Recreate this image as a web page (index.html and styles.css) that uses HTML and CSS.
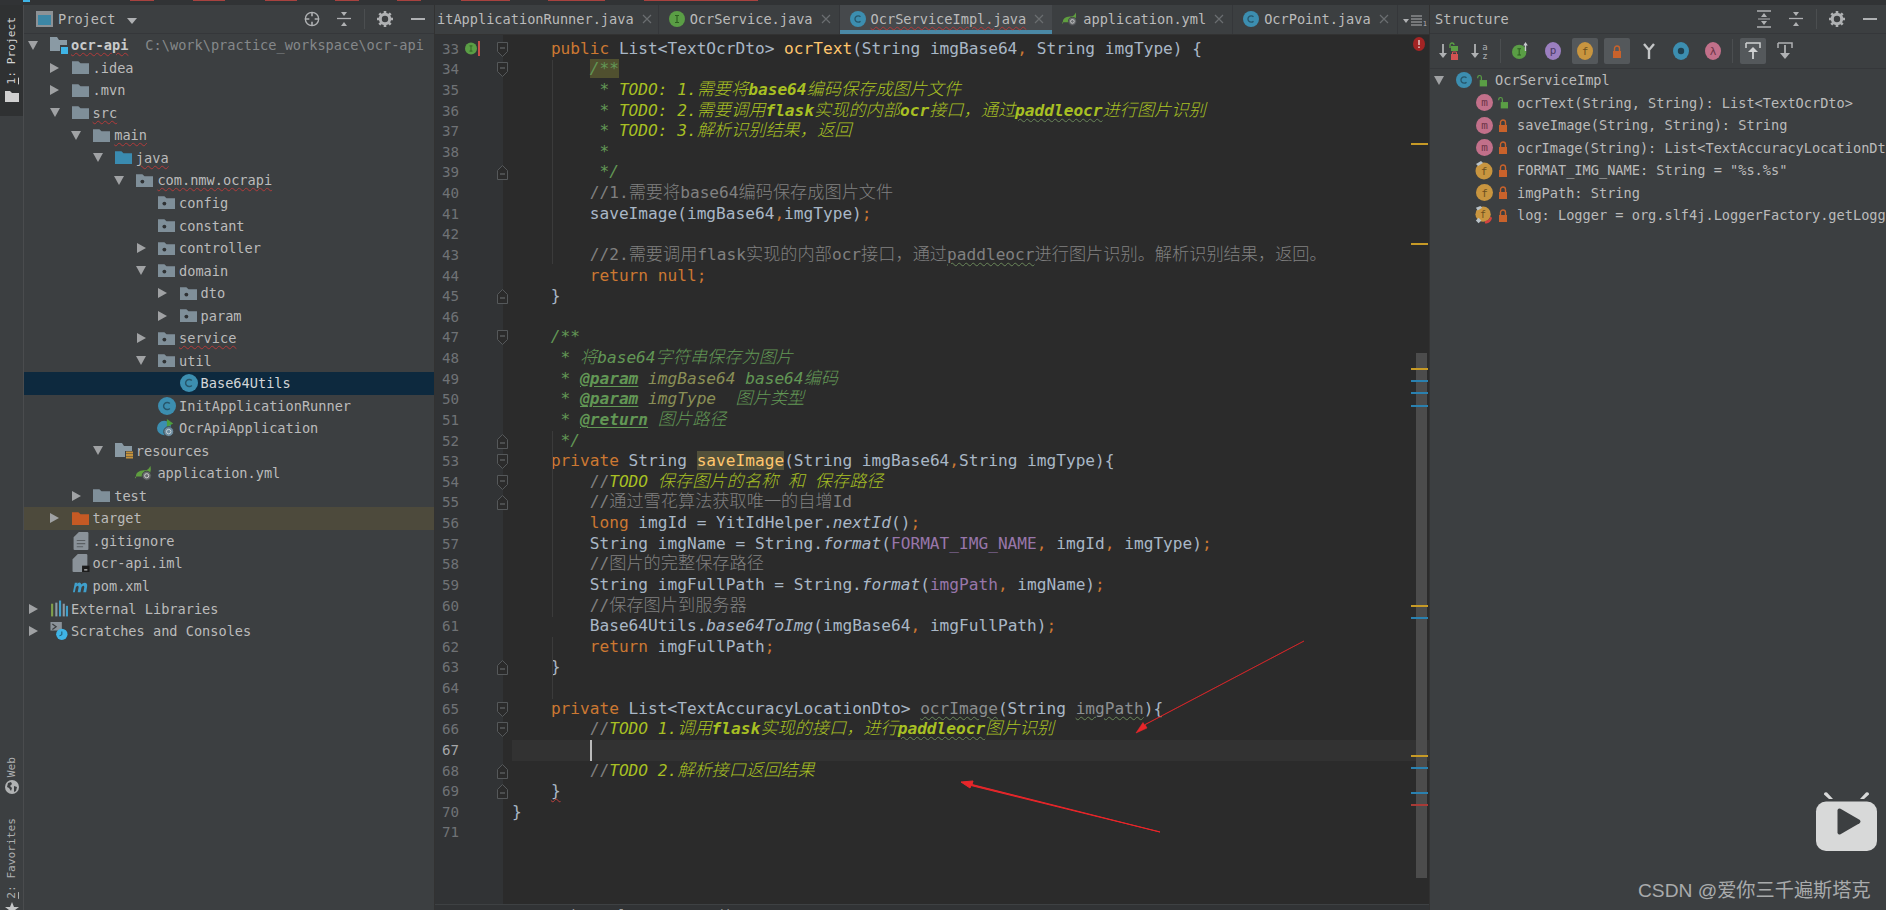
FILE: index.html
```html
<!DOCTYPE html>
<html lang="zh">
<head>
<meta charset="utf-8">
<title>ocr-api</title>
<link rel="stylesheet" href="styles.css">
</head>
<body>
<svg class="sprite" width="0" height="0">
  <symbol id="folder" viewBox="0 0 16 14"><path d="M0 1h6l2 2h8v10H0z"/></symbol>
  <symbol id="pkg" viewBox="0 0 16 14"><path d="M0 1h6l2 2h8v10H0z" fill="#7f8f99"/><circle cx="6" cy="8" r="1.8" fill="#2f3234"/></symbol>
  <symbol id="root" viewBox="0 0 18 18"><path d="M0 1h7l2 3h8v11H0z" fill="#8a9aa4"/><rect x="10" y="9" width="8" height="9" fill="#3c3f41"/><rect x="11" y="11" width="7" height="7" fill="#3fb4e6"/></symbol>
  <symbol id="res" viewBox="0 0 18 18"><path d="M0 1h7l2 3h8v11H0z" fill="#8a9aa4"/><rect x="10" y="9" width="8" height="9" fill="#3c3f41"/><path d="M11 10.5h7M11 13h7M11 15.500h7" stroke="#c4923c" stroke-width="2"/></symbol>
  <symbol id="cls" viewBox="0 0 16 16"><circle cx="8" cy="8" r="8" fill="#3c8eb0"/><path d="M10.500 5.800A3.200 3.200 0 1 0 10.500 10.200" fill="none" stroke="#27566b" stroke-width="1.300"/></symbol>
  <symbol id="run" viewBox="0 0 20 20"><circle cx="8" cy="10" r="8" fill="#3c8eb0"/><path d="M11 0l7 5-7 4z" fill="#4e9f3d"/><circle cx="13" cy="14" r="5.500" fill="#6f8da0" stroke="#3c3f41"/><circle cx="13" cy="14" r="2.500" fill="none" stroke="#cfd8dc"/></symbol>
  <symbol id="spring" viewBox="0 0 20 18"><path d="M1 13C1 7 7 6 11 6c3 0 5-2 6-5 2 6-1 12-7 12z" fill="#5f9e3f"/><path d="M1 13l-1 2" stroke="#5f9e3f"/><circle cx="13" cy="12" r="5" fill="#6a6d70" stroke="#3c3f41"/><circle cx="13" cy="12" r="2.300" fill="none" stroke="#d6d6d6"/></symbol>
  <symbol id="file" viewBox="0 0 14 17"><path d="M5 0h8a1 1 0 0 1 1 1v15a1 1 0 0 1-1 1H1a1 1 0 0 1-1-1V5z" fill="#8a9299"/><path d="M3 8h8M3 11h8M3 14h6" stroke="#5a5f63"/></symbol>
  <symbol id="iml" viewBox="0 0 16 17"><path d="M5 0h8a1 1 0 0 1 1 1v15a1 1 0 0 1-1 1H1a1 1 0 0 1-1-1V5z" fill="#8a9299"/><rect x="9" y="11" width="7" height="6" fill="#1b1b1b"/><path d="M11 15h3" stroke="#ddd"/></symbol>
  <symbol id="maven" viewBox="0 0 18 14"><path d="M1 13L3 3h3L5 5c2-3 4-3 5 0 2-3 7-3 6 2l-1 6h-3l1-5c0-3-2-2-3 0l-1 5H6l1-5c0-3-2-2-3 0l-1 5z" fill="#3f9fcb"/></symbol>
  <symbol id="libs" viewBox="0 0 17 16"><path d="M1 3h2v12H1z" fill="#7fa04c"/><path d="M5 2h2v13H5z" fill="#8a9aa4"/><path d="M8.500 0h2v15h-2z" fill="#3f9fcb"/><path d="M12 3h2v12h-2z" fill="#8a9aa4"/><path d="M15 5h2v10h-2z" fill="#3f9fcb"/></symbol>
  <symbol id="scratch" viewBox="0 0 18 19"><path d="M0 0h12v9H0z" fill="#8a9299"/><path d="M2 2l4 3-4 3" stroke="#3c3f41" stroke-width="1.300" fill="none"/><circle cx="12" cy="13" r="6" fill="#3fb4e6"/><path d="M12 10v3.500l-2.500 1" stroke="#1c4f66" fill="none"/></symbol>
  <symbol id="m" viewBox="0 0 17 17"><circle cx="8.500" cy="8.500" r="8.500" fill="#c2708a"/><text x="8.500" y="12" class="glyph" fill="#6c3447">m</text></symbol>
  <symbol id="f" viewBox="0 0 17 17"><circle cx="8.500" cy="8.500" r="8.500" fill="#c8953f"/><text x="8.500" y="12.500" class="glyph" fill="#6d5020">f</text></symbol>
  <symbol id="ff" viewBox="0 0 18 19"><circle cx="9" cy="10" r="8.500" fill="#c8953f"/><text x="9" y="14" class="glyph" fill="#6d5020">f</text><path d="M1 3l5-3 2 2-5 3z" fill="#b9c2c8"/></symbol>
  <symbol id="ffl" viewBox="0 0 20 21"><circle cx="9" cy="9" r="8.500" fill="#c8953f"/><text x="9" y="13" class="glyph" fill="#6d5020">f</text><path d="M1 2l5-2 2 2-5 3z" fill="#b9c2c8"/><path d="M4 13l3 3-3 3-3-3z" fill="#b9c2c8"/><path d="M11 19c3 1 7-1 8-6l-2-1c-1 3-3 4-6 5z" fill="#d2433f"/></symbol>
  <symbol id="lock" viewBox="0 0 10 13"><path d="M2.500 6V3.500a2.500 2.500 0 0 1 5 0V6" fill="none" stroke="#c9622b" stroke-width="1.400"/><rect x="1" y="6" width="8" height="7" fill="#c9622b"/></symbol>
  <symbol id="unlock" viewBox="0 0 11 13"><path d="M0.800 4V3a2 2 0 0 1 4 0v3" fill="none" stroke="#5a9e45" stroke-width="1.300"/><rect x="3" y="6" width="8" height="7" fill="#5a9e45"/></symbol>
  <symbol id="gear" viewBox="0 0 16 16"><path d="M6.500 0h3l.4 2.300 1.500.7 2-1.300 2.100 2.100-1.300 2 .7 1.500 2.100.400v3l-2.100.4-.7 1.500 1.300 2-2.100 2.100-2-1.300-1.500.7-.4 2.100h-3l-.4-2.100-1.500-.7-2 1.300L-.5 13.300l1.300-2-.7-1.500L-2 9.400v-3" fill="none"/><circle cx="8" cy="8" r="4.700" fill="none" stroke="#afb1b3" stroke-width="3"/><path d="M8 0v3M8 13v3M0 8h3M13 8h3M2.300 2.300l2.200 2.200M11.500 11.500l2.200 2.200M13.700 2.300l-2.200 2.200M4.500 11.500l-2.200 2.200" stroke="#afb1b3" stroke-width="2.600"/></symbol>
  <symbol id="collapse" viewBox="0 0 16 16"><path d="M1 7.500h14" stroke="#afb1b3" stroke-width="1.300"/><path d="M5 1h6L8 5zM5 15h6L8 11z" fill="#afb1b3"/></symbol>
  <symbol id="expand" viewBox="0 0 16 18"><path d="M1 1h14M1 17h14" stroke="#afb1b3" stroke-width="1.500"/><path d="M5 7h6L8 3zM5 11h6L8 15z" fill="#afb1b3"/><path d="M2 9h12" stroke="#afb1b3"/></symbol>
  <symbol id="locate" viewBox="0 0 18 18"><circle cx="9" cy="9" r="7.500" fill="none" stroke="#afb1b3" stroke-width="1.500"/><path d="M9 1v5M9 12v5M1 9h5M12 9h5" stroke="#afb1b3" stroke-width="1.800"/></symbol>
  <symbol id="panel" viewBox="0 0 17 16"><rect width="17" height="16" fill="#8d9296"/><rect x="2" y="4" width="13" height="10" fill="#3c87a6"/></symbol>
  <symbol id="folderlight" viewBox="0 0 14 11"><path d="M0 0h5l2 2h7v9H0z" fill="#d0d0d0"/></symbol>
  <symbol id="globe" viewBox="0 0 14 14"><circle cx="7" cy="7" r="7" fill="#b0b2b3"/><path d="M3 3l3-1 1 2-2 2 2 2-1 3-2-3-2-1zM9 6l3 1-1 4-2 1z" fill="#3c3f41"/></symbol>
  <symbol id="star" viewBox="0 0 14 14"><path d="M7 0l2 5h5l-4 3 2 6-5-4-5 4 2-6-4-3h5z" fill="#c4c6c7"/></symbol>
  <symbol id="close" viewBox="0 0 10 10"><path d="M1 1l8 8M9 1l-8 8" stroke="#6a6d70" stroke-width="1.200"/></symbol>
  <symbol id="ifc" viewBox="0 0 16 16"><circle cx="8" cy="8" r="8" fill="#5a9e45"/><path d="M6 4.500h4M8 4.500v7M6 11.500h4" stroke="#2d5e20" stroke-width="1.100"/></symbol>
  <symbol id="foldo" viewBox="0 0 11 15"><path d="M.5.5h10v9l-5 5-5-5z" fill="#2b2b2b" stroke="#55585a"/><path d="M3 6h5" stroke="#6f7274"/></symbol>
  <symbol id="foldc" viewBox="0 0 11 15"><path d="M.5 14.500h10v-9l-5-5-5 5z" fill="#2b2b2b" stroke="#55585a"/><path d="M3 9h5" stroke="#6f7274"/></symbol>
  <symbol id="sortv" viewBox="0 0 22 18"><path d="M5 2v11" stroke="#afb1b3" stroke-width="1.800"/><path d="M1 11h8l-4 5z" fill="#afb1b3"/><path d="M12 6V3a2 2 0 0 1 4 0" fill="none" stroke="#5a9e45" stroke-width="1.300"/><rect x="13" y="4" width="7" height="5" fill="#5a9e45"/><rect x="13" y="12" width="7" height="6" fill="#d25252"/><path d="M14.500 12v-2h4v2" fill="none" stroke="#d25252"/></symbol>
  <symbol id="sortaz" viewBox="0 0 22 18"><path d="M5 2v11" stroke="#afb1b3" stroke-width="1.800"/><path d="M1 11h8l-4 5z" fill="#afb1b3"/><text x="15" y="8" class="glyph small" fill="#afb1b3">a</text><text x="15" y="17" class="glyph small" fill="#afb1b3">z</text></symbol>
  <symbol id="inh" viewBox="0 0 20 20"><circle cx="8" cy="11" r="8" fill="#5a9e45"/><path d="M6 7.500h4M8 7.500v7M6 14.500h4" stroke="#2d5e20" stroke-width="1.200"/><path d="M15 10V3" stroke="#c8ccce" stroke-width="1.500"/><path d="M12.500 4L15 0l2.500 4z" fill="#c8ccce"/></symbol>
  <symbol id="pp" viewBox="0 0 16 18"><ellipse cx="8" cy="9" rx="8" ry="9" fill="#9b7fc0"/><text x="8" y="12" class="glyph" fill="#4a3a63">p</text></symbol>
  <symbol id="fo" viewBox="0 0 16 18"><ellipse cx="8" cy="9" rx="8" ry="9" fill="#c8953f"/><text x="8" y="13" class="glyph" fill="#6d5020">f</text></symbol>
  <symbol id="lam" viewBox="0 0 16 18"><ellipse cx="8" cy="9" rx="8" ry="9" fill="#c2708a"/><text x="8" y="13" class="glyph" fill="#6c3447">λ</text></symbol>
  <symbol id="anon" viewBox="0 0 16 18"><ellipse cx="8" cy="9" rx="8" ry="9" fill="#3c8eb0"/><circle cx="8" cy="9" r="3.200" fill="#20404f"/></symbol>
  <symbol id="ytree" viewBox="0 0 14 18"><path d="M2 2l5 6 5-6M7 8v9" fill="none" stroke="#c4c6c7" stroke-width="2.400"/></symbol>
  <symbol id="ato" viewBox="0 0 16 18"><path d="M1 1h14v5M1 1v5" fill="none" stroke="#d0d2d3" stroke-width="1.500"/><path d="M8 6v11" stroke="#d0d2d3" stroke-width="1.800"/><path d="M3 10h10L8 5z" fill="#d0d2d3"/></symbol>
  <symbol id="afrom" viewBox="0 0 16 18"><path d="M1 1h14v5M1 1v5" fill="none" stroke="#afb1b3" stroke-width="1.500"/><path d="M8 3v11" stroke="#afb1b3" stroke-width="1.800"/><path d="M3 11h10l-5 6z" fill="#afb1b3"/></symbol>
  <symbol id="tabs" viewBox="0 0 24 12"><path d="M1 5h6L4 9z" fill="#afb1b3"/><path d="M9 2h11M9 5h11M9 8h11M9 11h11" stroke="#afb1b3" stroke-width="1.100"/></symbol>
  <symbol id="error" viewBox="0 0 12 14"><ellipse cx="6" cy="7" rx="6" ry="7" fill="#a32424"/><path d="M6 3v5M6 9.500v1.500" stroke="#e8c8c8" stroke-width="1.500"/></symbol>
</svg>

<svg class="topstrip" viewBox="0 0 1886 5" preserveAspectRatio="none">
  <rect x="23" y="0" width="7" height="2" fill="#3fb4e6"/>
  <rect x="130" y="0" width="24" height="1" fill="#a8423f"/>
  <rect x="193" y="0" width="32" height="1" fill="#a8423f"/>
  <rect x="265" y="0" width="32" height="1" fill="#a8423f"/>
  <rect x="335" y="0" width="24" height="1" fill="#a8423f"/>
  <rect x="397" y="0" width="24" height="1" fill="#a8423f"/>
  <rect x="461" y="0" width="49" height="1" fill="#a8423f"/>
  <rect x="548" y="0" width="57" height="1" fill="#a8423f"/>
  <rect x="644" y="0" width="114" height="1" fill="#a8423f"/>
</svg>

<main class="ide">
  <aside class="rail">
    <div class="rail-tab">
      <span class="vtext bright"><u>1</u>: Project</span>
      <svg class="rail-folder"><use href="#folderlight"/></svg>
    </div>
    <div class="rail-bottom">
      <span class="vtext">Web</span>
      <svg class="rail-globe"><use href="#globe"/></svg>
      <span class="vtext fav"><u>2</u>: Favorites</span>
      <svg class="rail-star"><use href="#star"/></svg>
    </div>
  </aside>

  <section class="project">
    <header class="panel-head">
      <svg class="head-panel"><use href="#panel"/></svg>
      <span class="head-title">Project</span>
      <span class="caret-down"></span>
      <svg class="hicon first"><use href="#locate"/></svg>
      <svg class="hicon"><use href="#collapse"/></svg>
      <span class="hsep"></span>
      <svg class="hicon"><use href="#gear"/></svg>
      <span class="hminus"></span>
    </header>
    <div class="tree">
      <div class="row l0"><span class="arrow open"></span><svg class="ic"><use href="#root"/></svg><span class="bold err">ocr-api</span><span class="path">C:\work\practice_workspace\ocr-api</span></div>
      <div class="row l1"><span class="arrow"></span><svg class="ic fd"><use href="#folder"/></svg><span>.idea</span></div>
      <div class="row l1"><span class="arrow"></span><svg class="ic fd"><use href="#folder"/></svg><span>.mvn</span></div>
      <div class="row l1"><span class="arrow open"></span><svg class="ic fd"><use href="#folder"/></svg><span class="err">src</span></div>
      <div class="row l2"><span class="arrow open"></span><svg class="ic fd"><use href="#folder"/></svg><span class="err">main</span></div>
      <div class="row l3"><span class="arrow open"></span><svg class="ic fd blue"><use href="#folder"/></svg><span class="err">java</span></div>
      <div class="row l4"><span class="arrow open"></span><svg class="ic fd"><use href="#pkg"/></svg><span class="err">com.nmw.ocrapi</span></div>
      <div class="row l5"><span class="arrow none"></span><svg class="ic fd"><use href="#pkg"/></svg><span>config</span></div>
      <div class="row l5"><span class="arrow none"></span><svg class="ic fd"><use href="#pkg"/></svg><span>constant</span></div>
      <div class="row l5"><span class="arrow"></span><svg class="ic fd"><use href="#pkg"/></svg><span>controller</span></div>
      <div class="row l5"><span class="arrow open"></span><svg class="ic fd"><use href="#pkg"/></svg><span>domain</span></div>
      <div class="row l6"><span class="arrow"></span><svg class="ic fd"><use href="#pkg"/></svg><span>dto</span></div>
      <div class="row l6"><span class="arrow"></span><svg class="ic fd"><use href="#pkg"/></svg><span>param</span></div>
      <div class="row l5"><span class="arrow"></span><svg class="ic fd"><use href="#pkg"/></svg><span class="err">service</span></div>
      <div class="row l5"><span class="arrow open"></span><svg class="ic fd"><use href="#pkg"/></svg><span>util</span></div>
      <div class="row l6 selected"><span class="arrow none"></span><svg class="ic"><use href="#cls"/></svg><span>Base64Utils</span></div>
      <div class="row l5"><span class="arrow none"></span><svg class="ic"><use href="#cls"/></svg><span>InitApplicationRunner</span></div>
      <div class="row l5"><span class="arrow none"></span><svg class="ic wide"><use href="#run"/></svg><span>OcrApiApplication</span></div>
      <div class="row l3"><span class="arrow open"></span><svg class="ic"><use href="#res"/></svg><span>resources</span></div>
      <div class="row l4"><span class="arrow none"></span><svg class="ic wide"><use href="#spring"/></svg><span>application.yml</span></div>
      <div class="row l2"><span class="arrow"></span><svg class="ic fd"><use href="#folder"/></svg><span>test</span></div>
      <div class="row l1 excluded"><span class="arrow"></span><svg class="ic fd orange"><use href="#folder"/></svg><span>target</span></div>
      <div class="row l1"><span class="arrow none"></span><svg class="ic"><use href="#file"/></svg><span>.gitignore</span></div>
      <div class="row l1"><span class="arrow none"></span><svg class="ic"><use href="#iml"/></svg><span>ocr-api.iml</span></div>
      <div class="row l1"><span class="arrow none"></span><svg class="ic fd"><use href="#maven"/></svg><span>pom.xml</span></div>
      <div class="row l0"><span class="arrow"></span><svg class="ic"><use href="#libs"/></svg><span>External Libraries</span></div>
      <div class="row l0"><span class="arrow"></span><svg class="ic"><use href="#scratch"/></svg><span>Scratches and Consoles</span></div>
    </div>
  </section>

  <section class="editor">
    <nav class="tabs">
      <div class="tab clipped"><span>itApplicationRunner.java</span><svg class="x"><use href="#close"/></svg></div>
      <div class="tab"><svg class="tic"><use href="#ifc"/></svg><span>OcrService.java</span><svg class="x"><use href="#close"/></svg></div>
      <div class="tab active"><svg class="tic"><use href="#cls"/></svg><span class="err">OcrServiceImpl.java</span><svg class="x"><use href="#close"/></svg></div>
      <div class="tab"><svg class="tic"><use href="#spring"/></svg><span>application.yml</span><svg class="x"><use href="#close"/></svg></div>
      <div class="tab"><svg class="tic"><use href="#cls"/></svg><span>OcrPoint.java</span><svg class="x"><use href="#close"/></svg></div>
      <svg class="tabmenu"><use href="#tabs"/></svg><span class="tabmenu-n">1</span>
    </nav>
    <div class="body">
      <div class="lines">
        <div class="ln"><div class="no">33<svg class="gut-i"><use href="#ifc"/></svg><span class="gut-up"></span><svg class="fold"><use href="#foldo"/></svg></div><div class="code">    <span class="k">public</span> List&lt;TextOcrDto&gt; <span class="f">ocrText</span>(String imgBase64<span class="k">,</span> String imgType) {</div></div>
        <div class="ln"><div class="no">34<svg class="fold"><use href="#foldo"/></svg></div><div class="code">        <span class="d hlb">/**</span></div></div>
        <div class="ln"><div class="no">35</div><div class="code d">         * <span class="t">TODO: 1.<span class="z">需要将</span><b>base64</b><span class="z">编码保存成图片文件</span></span></div></div>
        <div class="ln"><div class="no">36</div><div class="code d">         * <span class="t">TODO: 2.<span class="z">需要调用</span><b>flask</b><span class="z">实现的内部</span><b>ocr</b><span class="z">接口，通过</span><b class="wg">paddleocr</b><span class="z">进行图片识别</span></span></div></div>
        <div class="ln"><div class="no">37</div><div class="code d">         * <span class="t">TODO: 3.<span class="z">解析识别结果，返回</span></span></div></div>
        <div class="ln"><div class="no">38</div><div class="code d">         *</div></div>
        <div class="ln"><div class="no">39<svg class="fold"><use href="#foldc"/></svg></div><div class="code d">         */</div></div>
        <div class="ln"><div class="no">40</div><div class="code c">        //1.<span class="z">需要将</span>base64<span class="z">编码保存成图片文件</span></div></div>
        <div class="ln"><div class="no">41</div><div class="code">        saveImage(imgBase64<span class="k">,</span>imgType)<span class="k">;</span></div></div>
        <div class="ln"><div class="no">42</div><div class="code"> </div></div>
        <div class="ln"><div class="no">43</div><div class="code c">        //2.<span class="z">需要调用</span>flask<span class="z">实现的内部</span>ocr<span class="z">接口，通过</span><span class="wg">paddleocr</span><span class="z">进行图片识别。解析识别结果，返回。</span></div></div>
        <div class="ln"><div class="no">44</div><div class="code">        <span class="k">return null;</span></div></div>
        <div class="ln"><div class="no">45<svg class="fold"><use href="#foldc"/></svg></div><div class="code">    }</div></div>
        <div class="ln"><div class="no">46</div><div class="code"> </div></div>
        <div class="ln"><div class="no">47<svg class="fold"><use href="#foldo"/></svg></div><div class="code d">    /**</div></div>
        <div class="ln"><div class="no">48</div><div class="code d">     * <span class="z">将</span>base64<span class="z">字符串保存为图片</span></div></div>
        <div class="ln"><div class="no">49</div><div class="code d">     * <span class="dt">@param</span> <span class="dp">imgBase64</span> base64<span class="z">编码</span></div></div>
        <div class="ln"><div class="no">50</div><div class="code d">     * <span class="dt">@param</span> <span class="dp">imgType</span>  <span class="z">图片类型</span></div></div>
        <div class="ln"><div class="no">51</div><div class="code d">     * <span class="dt">@return</span> <span class="z">图片路径</span></div></div>
        <div class="ln"><div class="no">52<svg class="fold"><use href="#foldc"/></svg></div><div class="code d">     */</div></div>
        <div class="ln"><div class="no">53<svg class="fold"><use href="#foldo"/></svg></div><div class="code">    <span class="k">private</span> String <span class="f hl">saveImage</span>(String imgBase64<span class="k">,</span>String imgType){</div></div>
        <div class="ln"><div class="no">54<svg class="fold"><use href="#foldo"/></svg></div><div class="code c">        //<span class="t">TODO <span class="z">保存图片的名称</span> <span class="z">和</span> <span class="z">保存路径</span></span></div></div>
        <div class="ln"><div class="no">55<svg class="fold"><use href="#foldc"/></svg></div><div class="code c">        //<span class="z">通过雪花算法获取唯一的自增</span>Id</div></div>
        <div class="ln"><div class="no">56</div><div class="code">        <span class="k">long</span> imgId = YitIdHelper.<i>nextId</i>()<span class="k">;</span></div></div>
        <div class="ln"><div class="no">57</div><div class="code">        String imgName = String.<i>format</i>(<span class="v">FORMAT_IMG_NAME</span><span class="k">,</span> imgId<span class="k">,</span> imgType)<span class="k">;</span></div></div>
        <div class="ln"><div class="no">58</div><div class="code c">        //<span class="z">图片的完整保存路径</span></div></div>
        <div class="ln"><div class="no">59</div><div class="code">        String imgFullPath = String.<i>format</i>(<span class="v">imgPath</span><span class="k">,</span> imgName)<span class="k">;</span></div></div>
        <div class="ln"><div class="no">60</div><div class="code c">        //<span class="z">保存图片到服务器</span></div></div>
        <div class="ln"><div class="no">61</div><div class="code">        Base64Utils.<i>base64ToImg</i>(imgBase64<span class="k">,</span> imgFullPath)<span class="k">;</span></div></div>
        <div class="ln"><div class="no">62</div><div class="code">        <span class="k">return</span> imgFullPath<span class="k">;</span></div></div>
        <div class="ln"><div class="no">63<svg class="fold"><use href="#foldc"/></svg></div><div class="code">    }</div></div>
        <div class="ln"><div class="no">64</div><div class="code"> </div></div>
        <div class="ln"><div class="no">65<svg class="fold"><use href="#foldo"/></svg></div><div class="code">    <span class="k">private</span> List&lt;TextAccuracyLocationDto&gt; <span class="unused wg">ocrImage</span>(String <span class="unused wg">imgPath</span>){</div></div>
        <div class="ln"><div class="no">66<svg class="fold"><use href="#foldo"/></svg></div><div class="code c">        //<span class="t">TODO 1.<span class="z">调用</span><b>flask</b><span class="z">实现的接口，进行</span><b class="wg">paddleocr</b><span class="z">图片识别</span></span></div></div>
        <div class="ln current"><div class="no">67</div><div class="code">        <span class="cursor"></span></div></div>
        <div class="ln"><div class="no">68<svg class="fold"><use href="#foldc"/></svg></div><div class="code c">        //<span class="t">TODO 2.<span class="z">解析接口返回结果</span></span></div></div>
        <div class="ln"><div class="no">69<svg class="fold"><use href="#foldc"/></svg></div><div class="code">    <span class="errb">}</span></div></div>
        <div class="ln"><div class="no">70</div><div class="code">}</div></div>
        <div class="ln"><div class="no">71</div><div class="code"> </div></div>
        <span class="guide g1"></span><span class="guide g2"></span><span class="guide g3"></span>
      </div>
      <svg class="err-mark"><use href="#error"/></svg>
      <span class="thumb"></span>
      <span class="mark y m1"></span><span class="mark y m2"></span><span class="mark y m3"></span>
      <span class="mark b m4"></span><span class="mark b m5"></span><span class="mark b m6"></span>
      <span class="mark y m7"></span><span class="mark b m8"></span><span class="mark y m9"></span>
      <span class="mark b m10"></span><span class="mark b m11"></span><span class="mark r m12"></span>
    </div>
    <div class="crumbs">OcrServiceImpl › ocrImage()</div>
  </section>

  <section class="structure">
    <header class="panel-head">
      <span class="head-title s">Structure</span>
      <svg class="hicon first"><use href="#expand"/></svg>
      <svg class="hicon"><use href="#collapse"/></svg>
      <span class="hsep"></span>
      <svg class="hicon"><use href="#gear"/></svg>
      <span class="hminus"></span>
    </header>
    <div class="stools">
      <span class="tb"><svg class="tbi wide"><use href="#sortv"/></svg></span>
      <span class="tb"><svg class="tbi wide"><use href="#sortaz"/></svg></span>
      <span class="tsep"></span>
      <span class="tb"><svg class="tbi wide"><use href="#inh"/></svg></span>
      <span class="tb"><svg class="tbi"><use href="#pp"/></svg></span>
      <span class="tb on"><svg class="tbi"><use href="#fo"/></svg></span>
      <span class="tb on"><svg class="tbl"><use href="#lock"/></svg></span>
      <span class="tb"><svg class="tbi"><use href="#ytree"/></svg></span>
      <span class="tb"><svg class="tbi"><use href="#anon"/></svg></span>
      <span class="tb"><svg class="tbi"><use href="#lam"/></svg></span>
      <span class="tsep"></span>
      <span class="tb on"><svg class="tbi"><use href="#ato"/></svg></span>
      <span class="tb"><svg class="tbi"><use href="#afrom"/></svg></span>
    </div>
    <div class="stree">
      <div class="srow sroot"><span class="arrow open"></span><svg class="sic"><use href="#cls"/></svg><svg class="slock"><use href="#unlock"/></svg><span>OcrServiceImpl</span></div>
      <div class="srow"><svg class="sic"><use href="#m"/></svg><svg class="slock"><use href="#unlock"/></svg><span>ocrText(String, String): List&lt;TextOcrDto&gt;</span></div>
      <div class="srow"><svg class="sic"><use href="#m"/></svg><svg class="slock"><use href="#lock"/></svg><span>saveImage(String, String): String</span></div>
      <div class="srow"><svg class="sic"><use href="#m"/></svg><svg class="slock"><use href="#lock"/></svg><span>ocrImage(String): List&lt;TextAccuracyLocationDto&gt;</span></div>
      <div class="srow"><svg class="sic big"><use href="#ff"/></svg><svg class="slock"><use href="#lock"/></svg><span>FORMAT_IMG_NAME: String = "%s.%s"</span></div>
      <div class="srow"><svg class="sic"><use href="#f"/></svg><svg class="slock"><use href="#lock"/></svg><span>imgPath: String</span></div>
      <div class="srow"><svg class="sic big"><use href="#ffl"/></svg><svg class="slock"><use href="#lock"/></svg><span>log: Logger = org.slf4j.LoggerFactory.getLogger(OcrServiceImpl.class)</span></div>
    </div>
  </section>
</main>

<svg class="annot" viewBox="0 0 1886 910">
  <path d="M1304 641L1145 724.500L1147 728L1136 733L1143 722.500L1144.500 725z" fill="#e8262a" stroke="#e8262a" stroke-width=".6"/>
  <path d="M1160 832L972 784.500L973 781L961 782L970 788L971 785.500z" fill="#e8262a" stroke="#e8262a" stroke-width="1"/>
</svg>

<svg class="bili" viewBox="0 0 61 59">
  <path d="M13 6L8 1.500a2 2 0 0 1 3-2L17 6h27L50-.500a2 2 0 0 1 3 2L48 6z" fill="#d8d9d9"/>
  <rect x="0" y="8.500" width="61" height="49.500" rx="10" fill="#d8d9d9"/>
  <path d="M21.500 22.500a2 2 0 0 1 3-1.700l19 11a2 2 0 0 1 0 3.400l-19 11a2 2 0 0 1-3-1.700z" transform="translate(0 -5)" fill="#3c3f41"/>
</svg>
<div class="watermark">CSDN @爱你三千遍斯塔克</div>
</body>
</html>
```

FILE: styles.css
```css
* { box-sizing: border-box; }
html, body { margin: 0; height: 100%; }
body {
  width: 1886px;
  height: 910px;
  overflow: hidden;
  position: relative;
  background: #3c3f41;
  color: #bbbbbb;
  font-family: "DejaVu Sans Mono", "Noto Sans CJK SC", monospace;
  font-size: 13.62px;
}
.sprite { position: absolute; }
.glyph { font-family: "DejaVu Sans Mono", monospace; font-size: 11px; text-anchor: middle; }
.glyph.small { font-size: 9px; }
.topstrip { display: block; width: 1886px; height: 5px; background: #313335; }
.ide { display: flex; height: 905px; }

/* left rail */
.rail {
  width: 24px;
  flex: none;
  display: flex;
  flex-direction: column;
  border-right: 1px solid #4a4c4e;
  overflow: hidden;
  font-size: 11.2px;
}
.rail-tab {
  height: 111px;
  background: #2f3132;
  display: flex;
  flex-direction: column;
  align-items: center;
  padding-top: 12px;
}
.vtext { writing-mode: vertical-rl; transform: rotate(180deg); line-height: 23px; color: #aeb0b1; }
.vtext.bright { color: #d4d4d4; }
.rail-folder { width: 14px; height: 11px; margin-top: 7px; }
.rail-bottom {
  margin-top: auto;
  display: flex;
  flex-direction: column;
  align-items: center;
  margin-bottom: -6px;
}
.rail-globe { width: 14px; height: 14px; margin-top: 3px; }
.vtext.fav { margin-top: 24px; }
.rail-star { width: 14px; height: 14px; margin-top: 3px; flex: none; }

/* project panel */
.project { width: 411px; flex: none; border-right: 1px solid #323232; overflow: hidden; }
.panel-head {
  height: 29px;
  display: flex;
  align-items: center;
  padding-left: 12px;
  border-bottom: 1px solid #35373a;
}
.head-panel { width: 17px; height: 16px; margin-left: 0; }
.head-title { margin-left: 5px; color: #bbbbbb; }
.head-title.s { margin-left: -7px; }
.caret-down {
  margin-left: 12px;
  margin-top: 3px;
  border-left: 5px solid transparent;
  border-right: 5px solid transparent;
  border-top: 6px solid #afb1b3;
}
.hicon { width: 16px; height: 18px; margin-left: 16px; flex: none; }
.hicon.first { margin-left: auto; }
.hsep { width: 1px; height: 20px; background: #4b4e50; margin-left: 12px; }
.hicon + .hsep + .hicon { margin-left: 12px; }
.hminus { width: 14px; height: 2px; background: #afb1b3; margin-left: 18px; margin-right: 9px; flex: none; }
.tree { display: flex; flex-direction: column; white-space: pre; }
.row { height: 22.54px; display: flex; align-items: center; flex: none; }
.l0 { padding-left: 0; }
.l1 { padding-left: 21.6px; }
.l2 { padding-left: 43.2px; }
.l3 { padding-left: 64.8px; }
.l4 { padding-left: 86.4px; }
.l5 { padding-left: 108px; }
.l6 { padding-left: 129.6px; }
.arrow { width: 18px; height: 10px; display: flex; justify-content: center; align-items: center; flex: none; }
.arrow::before {
  content: "";
  border-top: 5.5px solid transparent;
  border-bottom: 5.5px solid transparent;
  border-left: 9px solid #a0a2a4;
}
.arrow.open::before {
  border-left: 5.5px solid transparent;
  border-right: 5.5px solid transparent;
  border-top: 9px solid #a0a2a4;
  border-bottom: 0;
}
.arrow.none::before { display: none; }
.ic { width: 18px; height: 18px; margin-left: 8px; margin-right: 3px; flex: none; }
.ic.wide { width: 18px; height: 18px; margin-left: 7px; margin-right: 4px; }
.ic.fd { width: 17px; height: 15px; margin-left: 8px; margin-right: 4px; fill: #7f8f99; }
.ic.blue { fill: #3a8bb0; }
.ic.orange { fill: #c65a24; }
.err { text-decoration: underline wavy #b23a3a 1px; text-underline-offset: 2px; }
.bold { font-weight: bold; color: #c9cbcc; }
.path { margin-left: 17px; color: #85888a; }
.selected { background: #0d293e; color: #d4d6d8; }
.excluded { background: #4d4a3c; }

/* editor */
.editor { width: 994px; flex: none; display: flex; flex-direction: column; background: #2b2b2b; }
.tabs {
  height: 30px;
  background: #3c3f41;
  display: flex;
  align-items: stretch;
  border-bottom: 1px solid #323232;
  flex: none;
  overflow: hidden;
}
.tab {
  display: flex;
  align-items: center;
  padding: 0 8px 1px 10px;
  border-right: 1px solid #35373a;
  flex: none;
}
.tab.clipped { padding-left: 2px; padding-right: 6px; }
.tab.active { background: #46494c; box-shadow: inset 0 -4px 0 #4a88a5; border-right: 0; }
.tic { width: 16px; height: 16px; margin-right: 5px; flex: none; }
.x { width: 10px; height: 10px; margin-left: 8px; flex: none; }
.tabmenu { width: 24px; height: 12px; margin-left: 4px; align-self: center; flex: none; }
.tabmenu-n { font-size: 7px; align-self: center; margin-left: -3px; margin-top: 8px; color: #afb1b3; }
.body { position: relative; flex: 1; min-height: 0; overflow: hidden; }
.lines { position: relative; padding-top: 3.7px; font-size: 16.15px; color: #a9b7c6; background: linear-gradient(90deg, #313335 68px, transparent 68px); height: 100%; }
.ln { display: flex; height: 20.63px; line-height: 20.63px; white-space: pre; }
.no {
  position: relative;
  width: 77px;
  flex: none;
  padding-left: 7px;
  font-size: 14.2px;
  color: #6f7275;
}
.fold { position: absolute; left: 62px; top: 3px; width: 11px; height: 15px; }
.gut-i { position: absolute; left: 30px; top: 3px; width: 12px; height: 13px; }
.gut-up {
  position: absolute;
  left: 43px;
  top: 2px;
  width: 2px;
  height: 15px;
  background: #c7504a;
}
.code { flex: 1; }
.current .code { background: #323232; }
.current .no { color: #a4a6a8; }
.cursor { display: inline-block; width: 2px; height: 20.63px; background: #bbbbbb; vertical-align: top; }
.k { color: #cc7832; }
.f { color: #ffc66d; }
.c { color: #808080; }
.d { color: #629755; font-style: italic; }
.t { color: #a8c023; font-style: italic; }
.t b { font-weight: bold; }
.v { color: #9876aa; }
i { font-style: italic; }
.z { font-size: 17.2px; line-height: 1; font-weight: 300; }
.hlb { background: #50502f; }
.hl { background: #52503a; }
.dt { font-weight: bold; text-decoration: underline; text-underline-offset: 2px; }
.dp { color: #8a8f56; }
.wg { text-decoration: underline wavy #6a8759 1px; text-underline-offset: 2px; }
.unused { color: #8c8f91; }
.errb { text-decoration: underline wavy #bc3f3c 1px; text-underline-offset: 2px; }
.guide { position: absolute; left: 117px; width: 1px; background: #3b3b3b; }
.g1 { top: 25px; height: 204px; }
.g2 { top: 396px; height: 186px; }
.g3 { top: 602px; height: 62px; }
.err-mark { position: absolute; left: 978px; top: 2px; width: 12px; height: 14px; }
.thumb { position: absolute; left: 981px; top: 318px; width: 11px; height: 525px; background: #4c4c4c; }
.mark { position: absolute; left: 976px; width: 17px; height: 2px; }
.mark.y { background: #c79a26; }
.mark.b { background: #2a81b0; }
.mark.r { background: #a83a36; }
.m1 { top: 108px; }
.m2 { top: 208px; }
.m3 { top: 333px; }
.m4 { top: 345px; }
.m5 { top: 357px; }
.m6 { top: 370px; }
.m7 { top: 570px; }
.m8 { top: 582px; }
.m9 { top: 720px; }
.m10 { top: 732px; }
.m11 { top: 757px; }
.m12 { top: 769px; }
.crumbs {
  height: 6px;
  flex: none;
  background: #313335;
  border-top: 1px solid #3e4143;
  padding-left: 77px;
  line-height: 20px;
  overflow: hidden;
  color: #a0a2a4;
}

/* structure */
.structure { flex: 1; min-width: 0; overflow: hidden; border-left: 1px solid #323232; white-space: nowrap; }
.stools {
  height: 35px;
  display: flex;
  align-items: center;
  gap: 6px;
  padding-left: 6px;
  border-bottom: 1px solid #35373a;
}
.tb { width: 26px; height: 26px; border-radius: 2px; display: flex; align-items: center; justify-content: center; flex: none; }
.tb.on { background: #54585b; }
.tbi { width: 16px; height: 18px; }
.tbi.wide { width: 22px; height: 18px; }
.tbl { width: 10px; height: 13px; }
.tsep { width: 1px; height: 24px; background: #4b4e50; margin-right: 1px; flex: none; }
.stree { display: flex; flex-direction: column; }
.srow { height: 22.5px; display: flex; align-items: center; padding-left: 46px; flex: none; }
.sic { width: 17px; height: 17px; margin-right: 5px; flex: none; }
.sic.big { width: 18px; height: 19px; margin-left: -1px; }
.slock { width: 10px; height: 13px; margin-right: 9px; flex: none; }
.sroot { padding-left: 0; }
.sroot .sic { width: 16px; height: 16px; margin-left: 8px; }
.sroot .slock { margin-right: 8px; }

/* overlays */
.annot { position: absolute; left: 0; top: 0; width: 1886px; height: 910px; pointer-events: none; }
.bili { position: absolute; left: 1816px; top: 793px; width: 61px; height: 59px; overflow: visible; }
.watermark {
  position: absolute;
  left: 1638px;
  top: 878px;
  font-family: "Liberation Sans", "Noto Sans CJK SC", sans-serif;
  font-size: 19.2px;
  line-height: 25px;
  color: #a9abac;
  white-space: nowrap;
}
```
